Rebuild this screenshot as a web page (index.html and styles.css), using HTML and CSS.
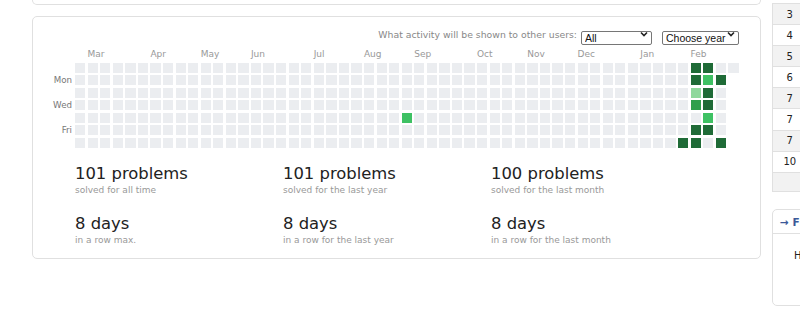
FILE: index.html
```html
<!DOCTYPE html>
<html lang="en">
<head>
    <meta charset="UTF-8">
    <meta name="viewport" content="width=device-width, initial-scale=1.0">
    <title>Activity</title>
    <link rel="stylesheet" href="styles.css">
</head>
<body>
    <div class="page">
        <div class="main">
            <div class="prev-card"></div>

            <div class="activity">
                <div class="controls">
                    <span class="controls-label">What activity will be shown to other users:</span>
                    <div class="select-wrap select-all">
                        <select>
                            <option>All</option>
                            <option>Only solved</option>
                        </select>
                        <svg class="chevron" viewBox="0 0 8 6"><path d="M1 1.5 L4 4.5 L7 1.5" /></svg>
                    </div>
                    <div class="select-wrap select-year">
                        <select>
                            <option>Choose year</option>
                            <option>2024</option>
                            <option>2023</option>
                        </select>
                        <svg class="chevron" viewBox="0 0 8 6"><path d="M1 1.5 L4 4.5 L7 1.5" /></svg>
                    </div>
                </div>

                <div class="heatmap">
                    <div></div>
                    <div class="months" id="months"></div>
                    <div class="days">
                        <span></span>
                        <span>Mon</span>
                        <span></span>
                        <span>Wed</span>
                        <span></span>
                        <span>Fri</span>
                        <span></span>
                    </div>
                    <div class="cells" id="cells"></div>
                </div>

                <div class="stats">
                    <div class="stat">
                        <div class="stat-value">101 problems</div>
                        <div class="stat-label">solved for all time</div>
                    </div>
                    <div class="stat">
                        <div class="stat-value">101 problems</div>
                        <div class="stat-label">solved for the last year</div>
                    </div>
                    <div class="stat">
                        <div class="stat-value">100 problems</div>
                        <div class="stat-label">solved for the last month</div>
                    </div>
                    <div class="stat">
                        <div class="stat-value">8 days</div>
                        <div class="stat-label">in a row max.</div>
                    </div>
                    <div class="stat">
                        <div class="stat-value">8 days</div>
                        <div class="stat-label">in a row for the last year</div>
                    </div>
                    <div class="stat">
                        <div class="stat-value">8 days</div>
                        <div class="stat-label">in a row for the last month</div>
                    </div>
                </div>
            </div>
        </div>

        <div class="side">
            <table class="rating-table">
                <tr class="dark"><td>3</td><td></td></tr>
                <tr><td>4</td><td></td></tr>
                <tr class="dark"><td>5</td><td></td></tr>
                <tr><td>6</td><td></td></tr>
                <tr class="dark"><td>7</td><td></td></tr>
                <tr><td>7</td><td></td></tr>
                <tr class="dark"><td>7</td><td></td></tr>
                <tr><td>10</td><td></td></tr>
                <tr class="dark last"><td></td><td></td></tr>
            </table>

            <div class="side-box">
                <div class="side-caption">&rarr; Find user</div>
                <div class="side-body">Handle:</div>
            </div>
        </div>
    </div>

    <script src="script.js"></script>
</body>
</html>
```

FILE: styles.css
```css
* {
    margin: 0;
    padding: 0;
    box-sizing: border-box;
}

body {
    font-family: "DejaVu Sans", Verdana, sans-serif;
    color: #222;
    background: #fff;
    overflow: hidden;
}

.page {
    display: flex;
    gap: 11px;
    padding-left: 32px;
    width: 1100px;
}

.main {
    width: 729px;
    flex: none;
}

.prev-card {
    height: 5px;
    border: 1px solid #e0e0e0;
    border-top: none;
    border-radius: 0 0 5px 5px;
}

.activity {
    margin-top: 11px;
    border: 1px solid #e0e0e0;
    border-radius: 5px;
    padding: 10px 21px 12px 6px;
}

/* top row with selects */
.controls {
    display: flex;
    justify-content: flex-end;
    align-items: center;
    gap: 4px;
    height: 14px;
}

.controls-label {
    font-size: 9.3px;
    color: #888;
}

.select-wrap {
    position: relative;
    height: 14px;
}

.select-year {
    margin-left: 6px;
}

.select-wrap select {
    appearance: none;
    -webkit-appearance: none;
    height: 14px;
    border: 1px solid #767676;
    border-radius: 2px;
    background: #fff;
    font-family: "Liberation Sans", Arial, sans-serif;
    font-size: 10.5px;
    color: #111;
    padding: 0 0 0 3px;
    line-height: 12px;
}

.select-all select {
    width: 71px;
}

.select-year select {
    width: 77px;
}

.chevron {
    position: absolute;
    right: 4px;
    top: 4px;
    width: 8px;
    height: 6px;
    fill: none;
    stroke: #222;
    stroke-width: 1.6;
    pointer-events: none;
}

/* heatmap */
.heatmap {
    display: grid;
    grid-template-columns: 36px auto;
    margin-top: 7px;
}

.months,
.cells {
    display: grid;
    grid-template-columns: repeat(53, 10.3px);
    column-gap: 2.28px;
}

.months {
    height: 14px;
    font-size: 9px;
    color: #999;
}

.months span {
    grid-row: 1;
    white-space: nowrap;
    line-height: 12px;
}

.cells {
    grid-template-rows: repeat(7, 10px);
    row-gap: 2.5px;
    grid-auto-flow: column;
    margin-top: 0.7px;
}

.cell {
    background: #ebedf0;
}

.cell.l1 { background: #8fd89c; }
.cell.l2 { background: #2f9f4c; }
.cell.l3 { background: #3ec163; }
.cell.l4 { background: #1f6b37; }

.days {
    display: grid;
    grid-template-rows: repeat(7, 10px);
    row-gap: 2.5px;
    padding-right: 3px;
    text-align: right;
    font-size: 8.7px;
    color: #777;
    margin-top: 0.7px;
}

.days span {
    line-height: 10px;
}

/* stats */
.stats {
    display: grid;
    grid-template-columns: repeat(3, 208px);
    row-gap: 19px;
    margin: 17px 0 0 36px;
}

.stat-value {
    font-size: 16.4px;
    line-height: 18px;
    color: #222;
}

.stat-label {
    font-size: 9px;
    line-height: 12px;
    color: #999;
    margin-top: 1.3px;
}

/* right sidebar */
.side {
    width: 240px;
    flex: none;
}

.rating-table {
    margin-top: 3px;
    width: 100%;
    border-collapse: collapse;
    border-left: 1px solid #e0e0e0;
    border-top: 1px solid #e0e0e0;
    font-size: 10px;
}

.rating-table td {
    height: 21.1px;
    border-bottom: 1px solid #e0e0e0;
    text-align: center;
    padding: 0;
}

.rating-table td:first-child {
    width: 34px;
}

.rating-table tr.dark td {
    background: #f2f2f2;
}

.rating-table tr.last td {
    height: 19.4px;
}

.side-box {
    margin-top: 17px;
    border: 1px solid #e0e0e0;
    border-radius: 5px;
    height: 97px;
}

.side-caption {
    height: 24px;
    line-height: 24px;
    padding-left: 7px;
    font-size: 10.5px;
    font-weight: bold;
    color: #3b5998;
    border-bottom: 1px solid #e0e0e0;
}

.side-body {
    padding: 16px 0 0 21px;
    font-size: 10px;
}
```

FILE: script.js
```js
// months: label and the week column where it starts
const months = [
    ['Mar', 1], ['Apr', 6], ['May', 10], ['Jun', 14], ['Jul', 19], ['Aug', 23],
    ['Sep', 27], ['Oct', 32], ['Nov', 36], ['Dec', 40], ['Jan', 45], ['Feb', 49]
];

const monthsEl = document.getElementById('months');
months.forEach(([name, col]) => {
    const span = document.createElement('span');
    span.textContent = name;
    span.style.gridColumn = (col + 1) + ' / span 4';
    monthsEl.appendChild(span);
});

// solved counts by [week, weekday] -> level
const activity = {
    '26,4': 3,
    '48,6': 4,
    '49,0': 4, '49,1': 4, '49,2': 1, '49,3': 2, '49,5': 4, '49,6': 4,
    '50,0': 4, '50,1': 3, '50,2': 4, '50,3': 4, '50,4': 3, '50,5': 4,
    '51,1': 4, '51,6': 4
};

const cellsEl = document.getElementById('cells');
const totalDays = 52 * 7 + 1;

for (let i = 0; i < totalDays; i++) {
    const week = Math.floor(i / 7);
    const day = i % 7;
    const cell = document.createElement('div');
    cell.className = 'cell';
    const level = activity[week + ',' + day];
    if (level) cell.classList.add('l' + level);
    cellsEl.appendChild(cell);
}
```
